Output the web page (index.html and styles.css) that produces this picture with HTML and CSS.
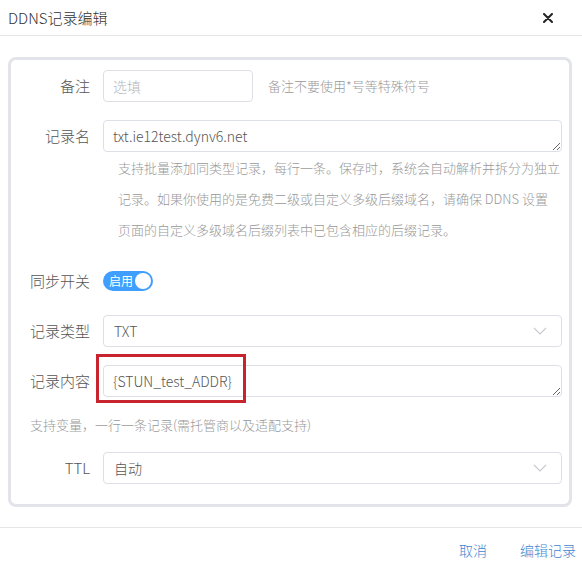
FILE: index.html
```html
<!DOCTYPE html>
<html lang="zh-CN">
<head>
<meta charset="utf-8">
<title>DDNS记录编辑</title>
<link rel="stylesheet" href="styles.css">
</head>
<body>
<div class="dialog">
  <div class="header">
    <span class="title">DDNS记录编辑</span>
    <svg class="close" width="10" height="10" viewBox="0 0 10 10"><path d="M1 1L9 9M9 1L1 9" stroke="#222" stroke-width="2" stroke-linecap="round"/></svg>
  </div>
  <div class="body">
    <div class="card">
      <div class="item">
        <label class="label">备注</label>
        <input class="input short" placeholder="选填">
        <span class="tip">备注不要使用*号等特殊符号</span>
      </div>
      <div class="item item-help">
        <label class="label">记录名</label>
        <div class="field">
          <textarea class="textarea">txt.ie12test.dynv6.net</textarea>
          <div class="help">支持批量添加同类型记录，每行一条。保存时，系统会自动解析并拆分为独立<br>记录。如果你使用的是免费二级或自定义多级后缀域名，请确保 DDNS 设置<br>页面的自定义多级域名后缀列表中已包含相应的后缀记录。</div>
        </div>
      </div>
      <div class="item">
        <label class="label">同步开关</label>
        <div class="switch"><span class="switch-text">启用</span><span class="knob"></span></div>
      </div>
      <div class="item">
        <label class="label">记录类型</label>
        <div class="select"><span>TXT</span><svg width="14" height="8" viewBox="0 0 14 8"><path d="M1 1L7 7L13 1" fill="none" stroke="#c8cbd1" stroke-width="1.2"/></svg></div>
      </div>
      <div class="item item-content">
        <label class="label">记录内容</label>
        <div class="field">
          <textarea class="textarea">{STUN_test_ADDR}</textarea>
          <div class="highlight"></div>
        </div>
      </div>
      <div class="note">支持变量，一行一条记录(需托管商以及适配支持)</div>
      <div class="item last">
        <label class="label">TTL</label>
        <div class="select"><span>自动</span><svg width="14" height="8" viewBox="0 0 14 8"><path d="M1 1L7 7L13 1" fill="none" stroke="#c8cbd1" stroke-width="1.2"/></svg></div>
      </div>
    </div>
  </div>
  <div class="footer">
    <span class="btn">取消</span>
    <span class="btn">编辑记录</span>
  </div>
</div>
</body>
</html>
```
FILE: styles.css
```css
* { box-sizing: border-box; }
html, body { margin: 0; padding: 0; background: #fff; }
body {
  font-family: "Noto Sans CJK SC", "Noto Sans", sans-serif;
  color: #333;
}
.dialog { width: 582px; height: 571px; display: flex; flex-direction: column; }
.header {
  height: 36px;
  border-bottom: 1px solid #e6e6e6;
  display: flex;
  align-items: center;
  justify-content: space-between;
  padding: 0 29px 0 8px;
}
.title { font-size: 15px; color: #333; font-weight: 300; }
.close { display: block; }
.body { padding: 21px 10px 20px 8px; }
.card {
  border: 3px solid #e2e4e9;
  border-radius: 8px;
  padding: 10px 7px 20px 0;
}
.item { display: flex; align-items: flex-start; margin-bottom: 18px; }
.item.last { margin-bottom: 0; }
.item-help { margin-bottom: 20px; }
.label {
  width: 92px;
  flex: none;
  padding-right: 13px;
  text-align: right;
  font-size: 15px;
  font-weight: 300;
  line-height: 32px;
  color: #555;
}
.input, .textarea, .select {
  height: 32px;
  border: 1px solid #dcdfe6;
  border-radius: 4px;
  font-family: inherit;
  font-size: 14px;
  font-weight: 300;
  color: #555;
  background: #fff;
  outline: none;
}
.input { padding: 0 9px; }
.input::placeholder { color: #b4b7bd; }
.short { width: 150px; }
.tip { font-size: 13px; font-weight: 300; color: #999; line-height: 32px; margin-left: 15px; }
.field { flex: 1; position: relative; }
.textarea {
  display: block;
  width: 100%;
  resize: vertical;
  padding: 5px 9px;
  line-height: 20px;
  overflow: hidden;
}
.help {
  padding-left: 15px;
  font-size: 13px;
  font-weight: 300;
  line-height: 31px;
  color: #999;
}
.switch {
  margin-top: 6px;
  width: 50px;
  height: 20px;
  border-radius: 10px;
  background: #409eff;
  position: relative;
  display: flex;
  align-items: center;
}
.switch-text { color: #fff; font-size: 12px; padding-left: 6px; line-height: 20px; }
.knob {
  position: absolute;
  right: 2px;
  top: 2px;
  width: 16px;
  height: 16px;
  border-radius: 50%;
  background: #fff;
}
.select {
  flex: 1;
  display: flex;
  align-items: center;
  justify-content: space-between;
  padding: 0 14px 0 10px;
}
.select svg { display: block; }
.item-content { margin-bottom: 0; }
.highlight {
  position: absolute;
  left: -7px;
  top: -11px;
  width: 150px;
  height: 49px;
  border: 3px solid #c8242e;
  pointer-events: none;
}
.note {
  padding-left: 19px;
  margin: 12px 0;
  font-size: 13px;
  font-weight: 300;
  line-height: 31px;
  color: #999;
}
.footer {
  border-top: 1px solid #e6e6e6;
  flex: 1;
  display: flex;
  justify-content: flex-end;
  align-items: center;
  gap: 33px;
  padding: 0 6px 0 0;
}
.btn { font-size: 14px; font-weight: 300; color: #3f86cf; }
```
